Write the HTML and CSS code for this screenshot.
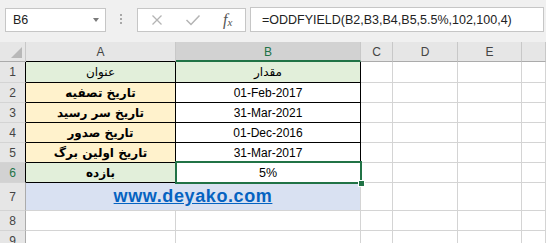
FILE: index.html
```html
<!DOCTYPE html>
<html lang="fa">

<head>
  <meta charset="UTF-8">
  <title>ODDFYIELD</title>
  <link rel="stylesheet" href="styles.css">
</head>

<body>
  <div class="toolbar">
    <div class="namebox"><span>B6</span><span class="caret"></span></div>
    <div class="grip"><i></i><i></i><i></i></div>
    <div class="fxbox">
      <svg class="ico" width="12" height="12" viewBox="0 0 12 12">
        <path d="M1.5 1.5 L10.5 10.5 M10.5 1.5 L1.5 10.5" stroke="#b4b4b4" stroke-width="1.3" fill="none" />
      </svg>
      <svg class="ico" width="16" height="12" viewBox="0 0 16 12">
        <path d="M1.5 6 L6 10.5 L14.5 1.5" stroke="#b4b4b4" stroke-width="1.5" fill="none" />
      </svg>
      <span class="fx">f<sub>x</sub></span>
    </div>
    <div class="formula">=ODDFYIELD(B2,B3,B4,B5,5.5%,102,100,4)</div>
  </div>

  <div class="sheet">
    <!-- headers -->
    <div class="hd corner"><span class="tri"></span></div>
    <div class="hd hd-a">A</div>
    <div class="hd hd-sel">B</div>
    <div class="hd">C</div>
    <div class="hd">D</div>
    <div class="hd">E</div>
    <div class="hd"></div>

    <!-- row 1 -->
    <div class="rn rn-t">1</div>
    <div class="c t green fa">عنوان</div>
    <div class="c t green fa">مقدار</div>
    <div class="c"></div>
    <div class="c"></div>
    <div class="c"></div>
    <div class="c"></div>

    <!-- row 2 -->
    <div class="rn rn-t">2</div>
    <div class="c t orange fa bold">تاریخ تصفیه</div>
    <div class="c t">01-Feb-2017</div>
    <div class="c"></div>
    <div class="c"></div>
    <div class="c"></div>
    <div class="c"></div>

    <!-- row 3 -->
    <div class="rn rn-t">3</div>
    <div class="c t orange fa bold">تاریخ سر رسید</div>
    <div class="c t">31-Mar-2021</div>
    <div class="c"></div>
    <div class="c"></div>
    <div class="c"></div>
    <div class="c"></div>

    <!-- row 4 -->
    <div class="rn rn-t">4</div>
    <div class="c t orange fa bold">تاریخ صدور</div>
    <div class="c t">01-Dec-2016</div>
    <div class="c"></div>
    <div class="c"></div>
    <div class="c"></div>
    <div class="c"></div>

    <!-- row 5 -->
    <div class="rn rn-t">5</div>
    <div class="c t orange fa bold">تاریخ اولین برگ</div>
    <div class="c t">31-Mar-2017</div>
    <div class="c"></div>
    <div class="c"></div>
    <div class="c"></div>
    <div class="c"></div>

    <!-- row 6 -->
    <div class="rn rn-t rn-sel">6</div>
    <div class="c t green fa bold">بازده</div>
    <div class="c t active">5%</div>
    <div class="c"></div>
    <div class="c"></div>
    <div class="c"></div>
    <div class="c"></div>

    <!-- row 7 -->
    <div class="rn">7</div>
    <div class="c link-cell"><a class="link" href="#">www.deyako.com</a></div>
    <div class="c"></div>
    <div class="c"></div>
    <div class="c"></div>
    <div class="c"></div>

    <!-- row 8 -->
    <div class="rn">8</div>
    <div class="c"></div>
    <div class="c"></div>
    <div class="c"></div>
    <div class="c"></div>
    <div class="c"></div>
    <div class="c"></div>

    <!-- row 9 -->
    <div class="rn">9</div>
    <div class="c"></div>
    <div class="c"></div>
    <div class="c"></div>
    <div class="c"></div>
    <div class="c"></div>
    <div class="c"></div>
  </div>
</body>

</html>
```

FILE: styles.css
```css
body {
  margin: 0;
  width: 546px;
  height: 243px;
  overflow: hidden;
  background: #fff;
  font-family: "Liberation Sans", "DejaVu Sans", sans-serif;
}

/* formula bar */
.toolbar {
  height: 42px;
  box-sizing: border-box;
  padding-top: 8px;
  background: #f0f0f0;
  display: flex;
  align-items: flex-start;
}

.namebox {
  margin-left: 5px;
  width: 101px;
  height: 24px;
  box-sizing: border-box;
  padding: 0 6px 0 7px;
  background: #fff;
  border: 1px solid #c6c6c6;
  display: flex;
  align-items: center;
  justify-content: space-between;
  font-size: 12.5px;
  color: #222;
}

.caret {
  width: 0;
  height: 0;
  border-left: 3.5px solid transparent;
  border-right: 3.5px solid transparent;
  border-top: 4px solid #7a7a7a;
}

.grip {
  margin: 6px 0 0 14px;
  width: 3px;
  display: flex;
  flex-direction: column;
  gap: 2px;
}

.grip i {
  width: 2px;
  height: 2px;
  background: #a8a8a8;
}

.fxbox {
  margin-left: 14px;
  width: 109px;
  height: 24px;
  box-sizing: border-box;
  background: #fff;
  border: 1px solid #c6c6c6;
  display: flex;
  align-items: center;
  padding-left: 13px;
}

.fxbox .ico:nth-child(2) {
  margin-left: 22px;
}

.fx {
  margin-left: 22px;
  font-family: "Liberation Serif", serif;
  font-style: italic;
  font-size: 16px;
  color: #555;
  line-height: 1;
}

.fx sub {
  font-size: 11px;
  vertical-align: -1px;
}

.formula {
  flex: 1;
  margin: -1px 2px 0 4px;
  height: 25px;
  box-sizing: border-box;
  padding-left: 11px;
  background: #fff;
  border: 1px solid #c6c6c6;
  display: flex;
  align-items: center;
  font-size: 12.5px;
  color: #222;
}

/* grid */
.sheet {
  display: grid;
  grid-template-columns: 26px 150px 185px 32px 65px 64px 1fr;
  grid-template-rows: 20px 21px 20px 20px 20px 20px 20px 28px 20px 20px;
  font-size: 12px;
}

.sheet > div {
  box-sizing: border-box;
  border-right: 1px solid #d4d4d4;
  border-bottom: 1px solid #d4d4d4;
  display: flex;
  align-items: center;
  justify-content: center;
}

.hd {
  background: #e6e6e6;
  color: #444;
  border-right-color: #c8c8c8 !important;
  border-bottom-color: #ababab !important;
  padding-top: 1px;
}

.corner {
  position: relative;
}

.tri {
  position: absolute;
  right: 3px;
  bottom: 3px;
  width: 0;
  height: 0;
  border-left: 11px solid transparent;
  border-bottom: 11px solid #b8b8b8;
}

.hd-a {
  border-bottom-color: #000 !important;
}

.hd-sel {
  background: #d2d2d2;
  color: #217346;
  border-bottom: 2px solid #217346 !important;
}

.rn {
  background: #e6e6e6;
  color: #444;
  border-bottom-color: #d4d4d4;
  border-right-color: #ababab !important;
}

.rn-t {
  border-right-color: #000 !important;
}

.rn-sel {
  background: #d2d2d2;
  color: #217346;
}

.t {
  border-right-color: #000 !important;
  border-bottom-color: #000 !important;
  color: #000;
}

.green {
  background: #e2efda;
}

.orange {
  background: #fff2cc;
}

.fa {
  direction: rtl;
  font-family: "DejaVu Sans", sans-serif;
  font-size: 12px;
}

.bold {
  font-weight: bold;
}

.active {
  position: relative;
  font-size: 12.5px;
}

.active::after {
  content: "";
  position: absolute;
  top: -2px;
  left: -1px;
  right: -2px;
  bottom: -2px;
  border: 2px solid #217346;
  z-index: 2;
}

.active::before {
  content: "";
  position: absolute;
  right: -5px;
  bottom: -5px;
  width: 5px;
  height: 5px;
  background: #217346;
  border: 1px solid #fff;
  z-index: 3;
}

.link-cell {
  grid-column: span 2;
  background: #d9e1f2;
  align-items: flex-end !important;
  padding-bottom: 3px;
}

.link {
  color: #0563c1;
  font-weight: bold;
  font-size: 18px;
  letter-spacing: 0.6px;
}
```
